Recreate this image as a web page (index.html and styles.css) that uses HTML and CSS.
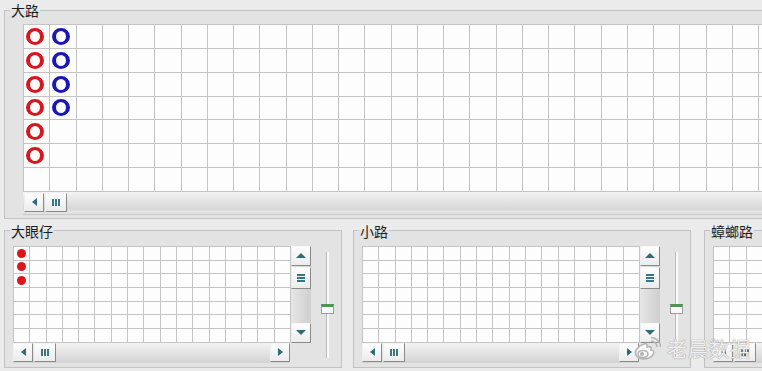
FILE: index.html
```html
<!DOCTYPE html>
<html lang="zh-CN">
<head>
	<meta charset="UTF-8">
	<title>路单</title>
<link rel="stylesheet" href="styles.css">
</head>
<body>
	<fieldset class="group group-big">
		<legend>大路</legend>
		<div class="big-body">
			<div class="board board-big" id="bigRoad"></div>
			<div class="hbar hbar-big">
				<span class="sbtn"><i class="arr arr-left"></i></span>
				<span class="sbtn hthumb"><i class="grip-v"></i></span>
				<span class="htrack"></span>
			</div>
		</div>
	</fieldset>

	<div class="lower">
		<fieldset class="group group-small">
			<legend>大眼仔</legend>
			<div class="small-body">
				<div class="view">
					<div class="view-main">
						<div class="board board-small" id="bigEye"></div>
						<div class="vbar">
							<span class="sbtn"><i class="arr arr-up"></i></span>
							<span class="sbtn vthumb"><i class="grip-h"></i></span>
							<span class="vtrack"></span>
							<span class="sbtn"><i class="arr arr-down"></i></span>
						</div>
					</div>
					<div class="hbar">
						<span class="sbtn"><i class="arr arr-left"></i></span>
						<span class="sbtn hthumb"><i class="grip-v"></i></span>
						<span class="htrack"></span>
						<span class="sbtn"><i class="arr arr-right"></i></span>
						<span class="corner"></span>
					</div>
				</div>
				<div class="slider"><span class="slider-line"></span><span class="slider-thumb"></span></div>
			</div>
		</fieldset>

		<fieldset class="group group-small">
			<legend>小路</legend>
			<div class="small-body">
				<div class="view">
					<div class="view-main">
						<div class="board board-small" id="smallRoad"></div>
						<div class="vbar">
							<span class="sbtn"><i class="arr arr-up"></i></span>
							<span class="sbtn vthumb"><i class="grip-h"></i></span>
							<span class="vtrack"></span>
							<span class="sbtn"><i class="arr arr-down"></i></span>
						</div>
					</div>
					<div class="hbar">
						<span class="sbtn"><i class="arr arr-left"></i></span>
						<span class="sbtn hthumb"><i class="grip-v"></i></span>
						<span class="htrack"></span>
						<span class="sbtn"><i class="arr arr-right"></i></span>
						<span class="corner"></span>
					</div>
				</div>
				<div class="slider"><span class="slider-line"></span><span class="slider-thumb"></span></div>
			</div>
		</fieldset>

		<fieldset class="group group-small group-last">
			<legend>蟑螂路</legend>
			<div class="small-body">
				<div class="view">
					<div class="view-main">
						<div class="board board-small" id="roachRoad"></div>
					</div>
					<div class="hbar">
						<span class="sbtn"><i class="arr arr-left"></i></span>
						<span class="sbtn hthumb"><i class="grip-v"></i></span>
						<span class="htrack"></span>
					</div>
				</div>
			</div>
		</fieldset>
	</div>

	<!-- 水印 -->
	<div class="watermark">
		<svg width="28" height="26" viewBox="0 0 28 26">
			<g fill="none" stroke="#b4b4b4" stroke-width="1.6">
				<path d="M11 8 C5 10 1 15 3 19 C5 24 15 24 19 20 C22 17 21 14 18 14 C19 11 17 10 14 11 C15 8 13 7 11 8Z" fill="rgba(255,255,255,.85)"/>
				<ellipse cx="10" cy="18" rx="5" ry="3.5"/>
				<circle cx="9" cy="18" r="1.3" fill="#b4b4b4"/>
				<path d="M18 5 A6 6 0 0 1 24 11"/>
				<path d="M18 1.5 A9.5 9.5 0 0 1 27.5 11"/>
			</g>
		</svg>
		<span>老晨数据</span>
	</div>

	<script>
		// 生成格子，marks: [列, 行, 类名]
		function fill(id, cols, rows, marks) {
			var board = document.getElementById(id);
			var cells = [];
			for (var i = 0; i < cols * rows; i++) {
				var d = document.createElement('div');
				d.className = 'cell';
				board.appendChild(d);
				cells.push(d);
			}
			for (var j = 0; j < marks.length; j++) {
				var m = document.createElement('span');
				m.className = marks[j][2];
				cells[marks[j][1] * cols + marks[j][0]].appendChild(m);
			}
		}
		fill('bigRoad', 29, 7, [
			[0,0,'ring red'],[0,1,'ring red'],[0,2,'ring red'],[0,3,'ring red'],[0,4,'ring red'],[0,5,'ring red'],
			[1,0,'ring blue'],[1,1,'ring blue'],[1,2,'ring blue'],[1,3,'ring blue']
		]);
		fill('bigEye', 17, 7, [[0,0,'dot'],[0,1,'dot'],[0,2,'dot']]);
		fill('smallRoad', 17, 7, []);
		fill('roachRoad', 17, 7, []);
	</script>
</body>
</html>
```

FILE: styles.css
```css
* { box-sizing: border-box; }
body {
	margin: 0;
	width: 762px;
	height: 371px;
	overflow: hidden;
	position: relative;
	background: #ebebeb;
	font-family: "Noto Sans CJK SC", "Noto Sans", sans-serif;
}

/* 分组框 */
.group {
	margin: 0;
	padding: 0;
	min-width: 0;
	border: 1px solid #c2c2c2;
	background: #e3e3e3;
}
.group legend {
	margin-left: 5px;
	padding: 0 1px;
	font-size: 14px;
	line-height: 16px;
	color: #1e1e1e;
}

.group-big { margin: 2px 0 0 4px; width: 758px; border-right: 0; }
.big-body { padding: 6px 0 3px 18px; overflow: hidden; }

.lower { display: flex; gap: 11px; margin: 4px 0 0 4px; }
.group-small { width: 338px; flex: none; }
.group-last { margin-left: 2px; width: 58px; border-right: 0; }
.group-last .small-body { overflow: hidden; }
.small-body { display: flex; padding: 7px 0 4px 8px; }

/* 路单格子 */
.board {
	display: grid;
	background: #fdfdfd;
	border-left: 1px solid #c4c4c4;
	border-top: 1px solid #c4c4c4;
}
.board-big { grid-template-columns: repeat(29, 26.25px); grid-template-rows: repeat(7, 23.85px); }
.board-small { grid-template-columns: repeat(17, 16.3px); grid-template-rows: repeat(7, 13.7px); width: 278px; flex: none; }
.cell {
	border-right: 1px solid #c4c4c4;
	border-bottom: 1px solid #c4c4c4;
	display: flex;
	align-items: center;
}
.ring {
	width: 18px;
	height: 17px;
	margin-left: 2px;
	border: solid;
	border-width: 3px 4px;
	border-radius: 50%;
}
.red { border-color: #d9151d; }
.blue { border-color: #1a17b9; }
.dot {
	width: 9px;
	height: 9px;
	margin-left: 3px;
	border-radius: 50%;
	background: #e0121a;
}

/* 滚动条 */
.view { display: flex; flex-direction: column; }
.view-main { display: flex; }
.hbar { display: flex; height: 20px; background: linear-gradient(#f3f3f3, #d3d3d3); }
.hbar-big {
	height: 23px;
	padding: 1px 0 3px 1px;
	border-bottom: 1px solid #cbcbcb;
	background: linear-gradient(#f3f3f3, #d6d6d6 80%, #e2e2e2 80%);
}
.htrack { flex: 1; }
.corner { width: 21px; background: #e3e3e3; }
.sbtn {
	width: 20px;
	height: 19px;
	flex: none;
	display: flex;
	align-items: center;
	justify-content: center;
	background: linear-gradient(#fdfdfd, #ececec);
	border: 1px solid;
	border-color: #f6f6f6 #8a8a8a #8a8a8a #f0f0f0;
}
.hthumb { width: 22px; margin-left: 1px; }
.vbar {
	width: 20px;
	display: flex;
	flex-direction: column;
	background: linear-gradient(to right, #e6e6e6, #cfcfcf);
}
.vbar .sbtn { height: 20px; }
.vthumb { height: 22px !important; margin-top: 1px; }
.vtrack { flex: 1; }

.arr { width: 0; height: 0; border: 0 solid transparent; }
.arr-left { border-width: 4px 5px 4px 0; border-right-color: #2e6c7a; }
.arr-right { border-width: 4px 0 4px 5px; border-left-color: #2e6c7a; }
.arr-up { border-width: 0 5px 5px; border-bottom-color: #2e6c7a; }
.arr-down { border-width: 5px 5px 0; border-top-color: #2e6c7a; }
.grip-v {
	width: 8px;
	height: 7px;
	background: repeating-linear-gradient(to right, #3c7683 0 2px, transparent 2px 3px);
}
.grip-h {
	width: 8px;
	height: 8px;
	background: repeating-linear-gradient(#3c7683 0 2px, transparent 2px 3px);
}

/* 滑块 */
.slider {
	position: relative;
	width: 13px;
	height: 106px;
	margin: 6px 0 0 10px;
}
.slider-line {
	position: absolute;
	left: 5px;
	top: 0;
	bottom: 0;
	width: 3px;
	background: #fafafa;
	border-left: 1px solid #b9b9b9;
}
.slider-thumb {
	position: absolute;
	left: 0;
	top: 52px;
	width: 13px;
	height: 10px;
	background: #f7f7f7;
	border: 1px solid #9c9c9c;
	border-top: 3px solid #4d9650;
}

/* 水印 */
.watermark {
	position: absolute;
	left: 633px;
	top: 336px;
	display: flex;
	align-items: center;
	gap: 6px;
}
.watermark span {
	font-size: 20px;
	line-height: 24px;
	color: rgba(255, 255, 255, 0.85);
	text-shadow: 0 0 1px #9a9a9a, 0 0 1px #9a9a9a;
	letter-spacing: 1px;
}
```
